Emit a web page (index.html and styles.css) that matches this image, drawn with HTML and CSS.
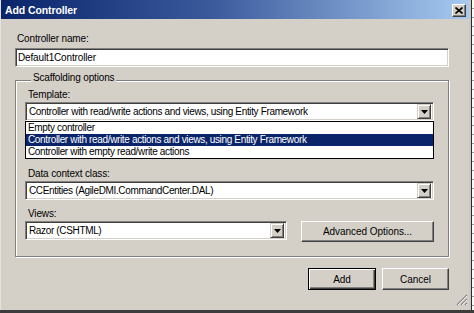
FILE: index.html
```html
<!DOCTYPE html>
<html>
<head>
  <title>Add Controller</title>
  <link rel="stylesheet" href="styles.css">
</head>
<body>
  <div class="screen">
    <div class="dialog">
      <div class="titlebar">
        <span class="title">Add Controller</span>
        <span class="close-btn">
          <svg width="8" height="7" viewBox="0 0 8 7"><path d="M0.5 0.5 L7.5 6.5 M7.5 0.5 L0.5 6.5" stroke="#000" stroke-width="1.6" fill="none"/></svg>
        </span>
      </div>

      <div class="content">
        <div class="label">Controller name:</div>
        <div class="field textbox">Default1Controller</div>

        <div class="group">
          <div class="group-title">Scaffolding options</div>

          <div class="label label-template">Template:</div>
          <div class="combo-wrap">
            <div class="field combo">
              <span class="combo-text">Controller with read/write actions and views, using Entity Framework</span>
              <span class="drop-btn"><svg width="7" height="4" viewBox="0 0 7 4"><path d="M0 0 H7 L3.5 4 Z" fill="#000"/></svg></span>
            </div>
            <ul class="dropdown">
              <li>Empty controller</li>
              <li class="selected">Controller with read/write actions and views, using Entity Framework</li>
              <li>Controller with empty read/write actions</li>
            </ul>
          </div>

          <div class="label label-data">Data context class:</div>
          <div class="field combo">
            <span class="combo-text">CCEntities (AgileDMI.CommandCenter.DAL)</span>
            <span class="drop-btn"><svg width="7" height="4" viewBox="0 0 7 4"><path d="M0 0 H7 L3.5 4 Z" fill="#000"/></svg></span>
          </div>

          <div class="label label-views">Views:</div>
          <div class="views-row">
            <div class="field combo combo-views">
              <span class="combo-text">Razor (CSHTML)</span>
              <span class="drop-btn"><svg width="7" height="4" viewBox="0 0 7 4"><path d="M0 0 H7 L3.5 4 Z" fill="#000"/></svg></span>
            </div>
            <div class="button btn-advanced">Advanced Options...</div>
          </div>
        </div>

        <div class="actions">
          <div class="button btn-default">Add</div>
          <div class="button btn-cancel">Cancel</div>
        </div>
      </div>

      <div class="grip-row">
        <svg class="grip" width="12" height="12" viewBox="0 0 12 12">
          <path d="M11 1 L1 11 M11 5 L5 11 M11 9 L9 11" stroke="#808080" stroke-width="1.2"/>
          <path d="M11 2 L2 11 M11 6 L6 11 M11 10 L10 11" stroke="#fff" stroke-width="0.8"/>
        </svg>
      </div>
    </div>
    <div class="backdrop"></div>
  </div>
  <div class="taskbar"></div>
</body>
</html>
```

FILE: styles.css
```css
body {
  margin: 0;
  width: 474px;
  height: 313px;
  overflow: hidden;
  background: #3c3c3c;
  font-family: "Liberation Sans", Arial, sans-serif;
  font-size: 10px;
  letter-spacing: -0.15px;
  color: #000;
}
.screen {
  display: flex;
  height: 310px;
}
.dialog {
  width: 468px;
  display: flex;
  flex-direction: column;
  background: #d4d0c8;
  border-left: 1px solid #e4e2dc;
}
.backdrop {
  flex: 1;
  background:
    linear-gradient(90deg, #c8c8c8 0 2px, #2a2a2a 2px 3px, transparent 3px),
    repeating-linear-gradient(180deg, #fafafa 0 8px, #9a9a9a 8px 9px);
}
.taskbar {
  height: 3px;
  background: #3c3c3c;
}

/* title bar */
.titlebar {
  height: 19px;
  display: flex;
  align-items: center;
  justify-content: space-between;
  padding: 0 3px 0 4px;
  background: linear-gradient(90deg, #0a246a 0%, #3a5a9c 45%, #a6caf0 100%);
}
.title {
  color: #fff;
  font-weight: bold;
  font-size: 10.5px;
  letter-spacing: -0.1px;
}
.close-btn {
  width: 14px;
  height: 13px;
  box-sizing: border-box;
  display: flex;
  align-items: center;
  justify-content: center;
  margin-top: 2px;
  background: #d4d0c8;
  border: 1px solid;
  border-color: #fff #404040 #404040 #fff;
  box-shadow: inset -1px -1px #808080;
}

/* body */
.content {
  padding: 13px 20px 0 14px;
  display: flex;
  flex-direction: column;
}
.label {
  line-height: 13px;
  height: 13px;
  padding-left: 2px;
  margin-bottom: 3px;
}
.field {
  box-sizing: border-box;
  height: 19px;
  background: #fff;
  border: 1px solid;
  border-color: #808080 #fff #fff #808080;
  box-shadow: inset 1px 1px #404040, inset -1px -1px #d4d0c8;
  display: flex;
  align-items: center;
  padding: 0 2px 0 2px;
  white-space: nowrap;
}

/* group box */
.group {
  margin-top: 13px;
  border: 1px solid #808080;
  box-shadow: inset 1px 1px #fff, 1px 1px #fff;
  padding: 0 14px 14px 9px;
  display: flex;
  flex-direction: column;
}
.group-title {
  align-self: flex-start;
  margin: -10px 0 0 6px;
  padding: 0 2px;
  line-height: 13px;
  background: #d4d0c8;
}
.group .label {
  margin-bottom: 1px;
  padding-left: 3px;
}
.label-template {
  margin-top: 4px;
}
.label-data {
  margin-top: 46px;
}
.label-views {
  margin-top: 7px;
}

/* combo boxes */
.combo-wrap {
  position: relative;
}
.combo {
  padding-right: 2px;
}
.combo-text {
  flex: 1;
  padding-left: 1px;
  letter-spacing: -0.35px;
}
.drop-btn {
  width: 14px;
  height: 15px;
  box-sizing: border-box;
  display: flex;
  align-items: center;
  justify-content: center;
  background: #d4d0c8;
  border: 1px solid;
  border-color: #d4d0c8 #404040 #404040 #d4d0c8;
  box-shadow: inset 1px 1px #fff, inset -1px -1px #808080;
}
.dropdown {
  position: absolute;
  top: 100%;
  left: 0;
  right: 0;
  margin: 0;
  padding: 0;
  list-style: none;
  background: #fff;
  border: 1px solid #000;
  letter-spacing: -0.35px;
}
.dropdown li {
  height: 12px;
  line-height: 12px;
  padding-left: 2px;
  white-space: nowrap;
}
.dropdown .selected {
  background: #0a246a;
  color: #fff;
}

.views-row {
  display: flex;
  align-items: flex-start;
}
.combo-views {
  width: 262px;
}

/* buttons */
.button {
  box-sizing: border-box;
  height: 21px;
  display: flex;
  align-items: center;
  justify-content: center;
  background: #d4d0c8;
  border: 1px solid;
  border-color: #fff #404040 #404040 #fff;
  box-shadow: inset -1px -1px #808080;
  letter-spacing: -0.05px;
}
.btn-advanced {
  margin-left: auto;
  width: 133px;
}
.actions {
  margin-top: 11px;
  display: flex;
  justify-content: flex-end;
  gap: 6px;
}
.actions .button {
  height: 22px;
}
.btn-default {
  width: 68px;
  border: 1px solid #000;
  box-shadow: inset 1px 1px #fff, inset -1px -1px #404040, inset -2px -2px #808080;
}
.btn-cancel {
  width: 67px;
}

.grip-row {
  margin-top: auto;
  display: flex;
  justify-content: flex-end;
  padding: 0 1px 4px 0;
}
```
